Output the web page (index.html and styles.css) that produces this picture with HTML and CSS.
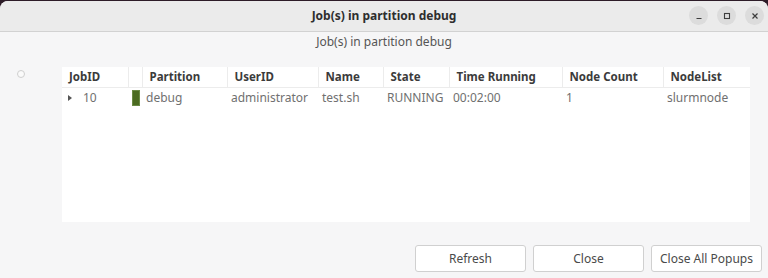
FILE: index.html
```html
<html>
    <head>
       <meta charset="utf-8">
       <!-- for styling -->
       <link rel="stylesheet" href="styles.css">
    </head>
    <body>
       <div id="window">
          <!-- title bar -->
          <div id="titlebar">
             <div class="title">Job(s) in partition debug</div>
             <div class="controls">
                <span class="ctl"><svg width="10" height="10" viewBox="0 0 10 10"><path d="M2.5 7.5h5" stroke="#3d3d3d" stroke-width="1.2"/></svg></span>
                <span class="ctl"><svg width="10" height="10" viewBox="0 0 10 10"><rect x="2.5" y="2.5" width="5" height="5" fill="none" stroke="#3d3d3d" stroke-width="1.1"/></svg></span>
                <span class="ctl"><svg width="10" height="10" viewBox="0 0 10 10"><path d="M2.5 2.5l5 5M7.5 2.5l-5 5" stroke="#3d3d3d" stroke-width="1.2"/></svg></span>
             </div>
          </div>
          <div id="content">
             <div class="subtitle">Job(s) in partition debug</div>
             <div class="main">
                <div class="side"><span class="dot"></span></div>
                <div class="jobs">
                   <table>
                      <colgroup>
                         <col style="width:66px"><col style="width:14px"><col style="width:85px">
                         <col style="width:91px"><col style="width:65px"><col style="width:66px">
                         <col style="width:113px"><col style="width:101px"><col style="width:87px">
                      </colgroup>
                      <tr class="head">
                         <th>JobID</th>
                         <th></th>
                         <th>Partition</th>
                         <th>UserID</th>
                         <th>Name</th>
                         <th>State</th>
                         <th>Time Running</th>
                         <th>Node Count</th>
                         <th>NodeList</th>
                      </tr>
                      <tr>
                         <td class="id"><span class="arrow"></span>10</td>
                         <td class="swatch"><span class="color"></span></td>
                         <td>debug</td>
                         <td>administrator</td>
                         <td>test.sh</td>
                         <td>RUNNING</td>
                         <td>00:02:00</td>
                         <td>1</td>
                         <td>slurmnode</td>
                      </tr>
                   </table>
                </div>
             </div>
             <div class="buttons">
                <button class="btn">Refresh</button>
                <button class="btn">Close</button>
                <button class="btn">Close All Popups</button>
             </div>
          </div>
       </div>
    </body>
</html>
```

FILE: styles.css
```css
*
{
   margin: 0px;
   padding: 0px;
   box-sizing: border-box;
}
body
{
   font-family: "Noto Sans", "Open Sans", sans-serif;
   font-size: 12px;
   background-color: #2d1c28;
   width: 768px;
   height: 278px;
   overflow: hidden;
}
#window
{
   margin-top: 1px;
   height: 277px;
   background-color: #f6f6f7;
   border-radius: 8px 8px 0 0;
   overflow: hidden;
}
#titlebar
{
   height: 31px;
   padding-bottom: 2px;
   background-color: #ebebeb;
   border-bottom: 1px solid #d2d2d2;
   display: flex;
   align-items: center;
   justify-content: center;
   position: relative;
}
.title
{
   font-weight: bold;
   font-size: 12px;
   color: #2e2e2e;
}
.controls
{
   position: absolute;
   right: 4px;
   top: 5px;
   display: flex;
   gap: 9px;
}
.ctl
{
   width: 19px;
   height: 19px;
   border-radius: 50%;
   background-color: #dcdcdc;
   display: flex;
   align-items: center;
   justify-content: center;
}
.subtitle
{
   text-align: center;
   color: #555;
   font-size: 12px;
   height: 21px;
   line-height: 19px;
}
.main
{
   display: flex;
   margin-top: 14px;
}
.side
{
   width: 62px;
   padding: 3px 0 0 17px;
}
.dot
{
   display: block;
   width: 8px;
   height: 8px;
   border-radius: 50%;
   border: 1px solid #cfcfcf;
   background-color: #fafafa;
}
.jobs
{
   width: 688px;
   height: 155px;
   background-color: white;
}
table
{
   border-collapse: collapse;
   table-layout: fixed;
   width: 688px;
   font-family: "Noto Sans", "Open Sans", sans-serif;
   font-size: 11.5px;
}
th
{
   text-align: left;
   font-weight: bold;
   color: #3b3b3b;
   height: 20px;
   padding: 0 0 0 7px;
   border-left: 1px solid #ececec;
   border-bottom: 1px solid #ececec;
   white-space: nowrap;
}
th:first-child
{
   border-left: none;
}
td
{
   color: #707070;
   height: 20px;
   padding: 1px 0 0 4px;
   white-space: nowrap;
   font-size: 12px;
}
td.id
{
   padding-left: 6px;
}
.arrow
{
   display: inline-block;
   width: 0;
   height: 0;
   border-left: 4px solid #555;
   border-top: 3.5px solid transparent;
   border-bottom: 3.5px solid transparent;
   margin-right: 11px;
   vertical-align: 1px;
}
td.swatch
{
   padding: 1px 0 0 4px;
}
.color
{
   display: block;
   width: 8px;
   height: 16px;
   background-color: #4b6b21;
   border: 1px solid #6a8a45;
}
.buttons
{
   display: flex;
   justify-content: flex-end;
   gap: 7px;
   margin-top: 23px;
   padding-right: 6px;
}
.btn
{
   width: 111px;
   height: 27px;
   background-color: white;
   border: 1px solid #d0d0d0;
   border-radius: 3px;
   font-family: "Noto Sans", "Open Sans", sans-serif;
   font-size: 12px;
   color: #4a4a4a;
}
```
